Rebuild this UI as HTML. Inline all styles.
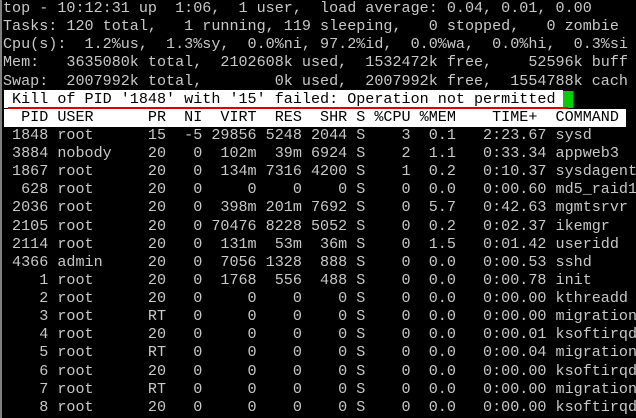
<!DOCTYPE html>
<html><head><meta charset="utf-8"><style>
html,body{margin:0;padding:0;background:#000;width:636px;height:418px;overflow:hidden;position:relative}
pre{position:absolute;left:3px;top:-1px;margin:0;font-family:"Liberation Mono","Courier New",monospace;font-size:15.1px;line-height:18.13px;color:#c8c8c8;white-space:pre}
.b{position:absolute}
</style></head><body>
<div class="b" style="left:0;top:0;width:2px;height:418px;background:#808080"></div>
<div class="b" style="left:4px;top:90px;width:559px;height:18px;background:#fff"></div>
<div class="b" style="left:563px;top:91px;width:10px;height:17px;background:#00d000"></div>
<div class="b" style="left:4px;top:109px;width:622px;height:18px;background:#fff"></div>
<div class="b" style="left:8px;top:107px;width:560px;height:2px;background:#e00000"></div>
<pre>top - 10:12:31 up  1:06,  1 user,  load average: 0.04, 0.01, 0.00
Tasks: 120 total,   1 running, 119 sleeping,   0 stopped,   0 zombie
Cpu(s):  1.2%us,  1.3%sy,  0.0%ni, 97.2%id,  0.0%wa,  0.0%hi,  0.3%si
Mem:   3635080k total,  2102608k used,  1532472k free,    52596k buff
Swap:  2007992k total,        0k used,  2007992k free,  1554788k cach
<span style="color:#000"> Kill of PID '1848' with '15' failed: Operation not permitted</span>
<span style="color:#000">  PID USER      PR  NI  VIRT  RES  SHR S %CPU %MEM    TIME+  COMMAND</span>
 1848 root      15  -5 29856 5248 2044 S    3  0.1   2:23.67 sysd
 3884 nobody    20   0  102m  39m 6924 S    2  1.1   0:33.34 appweb3
 1867 root      20   0  134m 7316 4200 S    1  0.2   0:10.37 sysdagent
  628 root      20   0     0    0    0 S    0  0.0   0:00.60 md5_raid1
 2036 root      20   0  398m 201m 7692 S    0  5.7   0:42.63 mgmtsrvr
 2105 root      20   0 70476 8228 5052 S    0  0.2   0:02.37 ikemgr
 2114 root      20   0  131m  53m  36m S    0  1.5   0:01.42 useridd
 4366 admin     20   0  7056 1328  888 S    0  0.0   0:00.53 sshd
    1 root      20   0  1768  556  488 S    0  0.0   0:00.78 init
    2 root      20   0     0    0    0 S    0  0.0   0:00.00 kthreadd
    3 root      RT   0     0    0    0 S    0  0.0   0:00.00 migration
    4 root      20   0     0    0    0 S    0  0.0   0:00.01 ksoftirqd
    5 root      RT   0     0    0    0 S    0  0.0   0:00.04 migration
    6 root      20   0     0    0    0 S    0  0.0   0:00.00 ksoftirqd
    7 root      RT   0     0    0    0 S    0  0.0   0:00.00 migration
    8 root      20   0     0    0    0 S    0  0.0   0:00.00 ksoftirqd</pre>
</body></html>
